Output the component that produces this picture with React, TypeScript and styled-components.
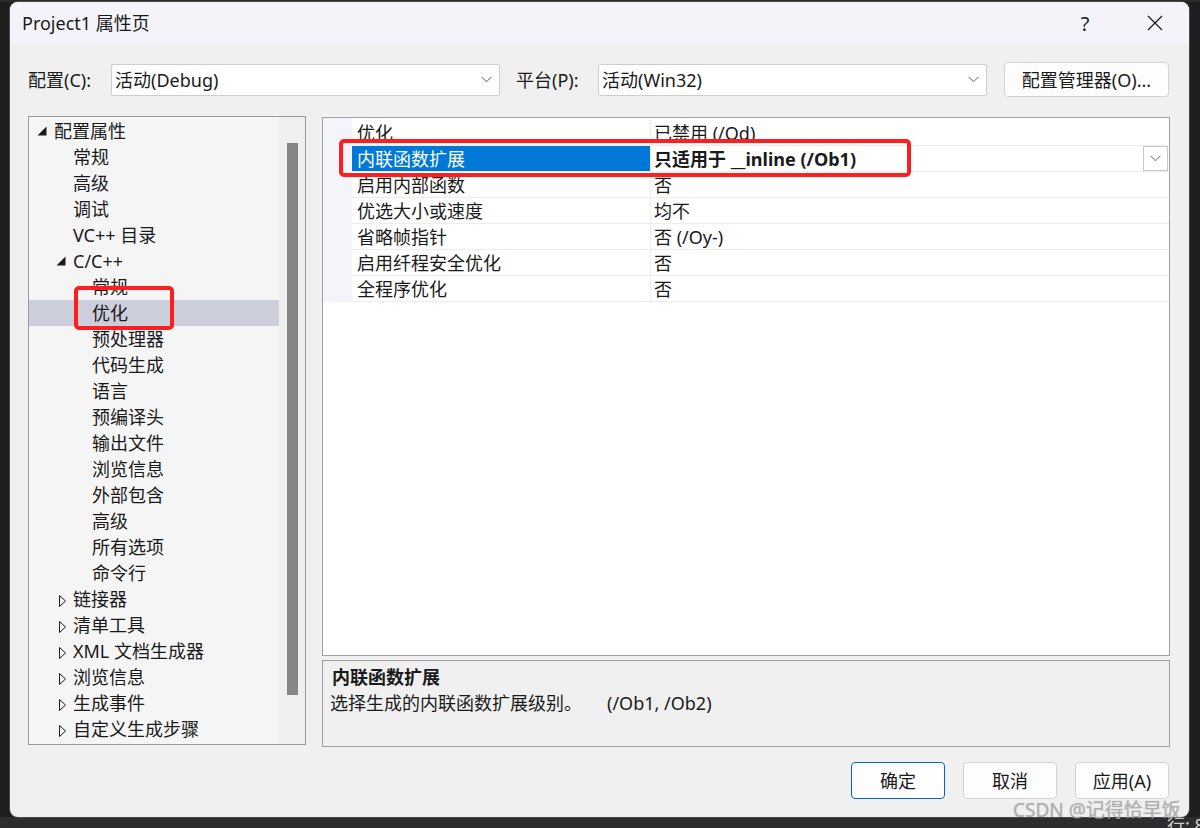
import React from "react";
import styled, { createGlobalStyle } from "styled-components";

const GlobalStyle = createGlobalStyle`
  html, body { margin: 0; padding: 0; background: #1e1e1e; }
  body { font-family: "Noto Sans", "Noto Sans CJK SC", sans-serif; }
  #root { width: 1200px; height: 828px; }
  * { box-sizing: border-box; }
`;

const FONT = `"Noto Sans", "Noto Sans CJK SC", sans-serif`;

const Page = styled.div`
  position: relative;
  width: 1200px;
  height: 828px;
  overflow: hidden;
  background: #1e1e1e;
  display: flex;
  flex-direction: column;
  font-family: ${FONT};
  color: #1a1a1a;
`;

const TopStrip = styled.div`
  height: 2px;
  background: #2b2b2b;
`;

const Window = styled.div`
  position: relative;
  width: 1179px;
  height: 815px;
  margin-left: 10px;
  background: #f0f0f0;
  border-radius: 8px;
  overflow: hidden;
  box-shadow: 0 0 0 1px #4a4a4a;
  display: flex;
  flex-direction: column;
`;

const TitleBar = styled.div`
  height: 42px;
  flex: none;
  background: #f3f3f9;
  display: flex;
  align-items: center;
  padding-left: 12px;
  padding-right: 11px;
`;

const TitleText = styled.div`
  font-size: 18px;
  line-height: 24px;
  color: #1a1a1a;
`;

const TitleButtons = styled.div`
  margin-left: auto;
  display: flex;
  gap: 24px;
`;

const TitleButton = styled.div`
  width: 46px;
  height: 42px;
  display: flex;
  align-items: center;
  justify-content: center;
  font-size: 20px;
  color: #1a1a1a;
`;

const Body = styled.div`
  flex: 1;
  display: flex;
  flex-direction: column;
  padding: 0 19px 18px 18px;
`;

const ConfigRow = styled.div`
  margin-top: 18px;
  height: 35px;
  display: flex;
  align-items: center;
`;

const Label = styled.div<{ $w: number; $ml?: number }>`
  width: ${(p) => p.$w}px;
  margin-left: ${(p) => p.$ml ?? 0}px;
  font-size: 18px;
  line-height: 24px;
  white-space: nowrap;
`;

const SelectBox = styled.div`
  width: 389px;
  height: 32px;
  background: #ffffff;
  border: 1px solid #cdcdcd;
  border-radius: 2px;
  display: flex;
  align-items: center;
  padding-left: 3px;
  padding-right: 7px;
  font-size: 18px;
  line-height: 24px;
`;

const SelectText = styled.span`
  flex: 1;
`;

const PushButton = styled.div<{ $w: number; $h: number; $primary?: boolean; $ml?: number }>`
  width: ${(p) => p.$w}px;
  height: ${(p) => p.$h}px;
  margin-left: ${(p) => p.$ml ?? 0}px;
  background: #fdfdfd;
  border: 1px solid ${(p) => (p.$primary ? "#0067c0" : "#d3d3d3")};
  border-radius: 4px;
  display: flex;
  align-items: center;
  justify-content: center;
  font-size: 18px;
  line-height: 24px;
  white-space: nowrap;
`;

const Main = styled.div`
  margin-top: 19px;
  height: 631px;
  display: grid;
  grid-template-columns: 278px 848px;
  column-gap: 16px;
  align-items: start;
`;

const TreePanel = styled.div`
  height: 629px;
  border: 1px solid #9a9a9a;
  background: #f5f5f5;
  display: grid;
  grid-template-columns: 1fr 26px;
`;

const TreeList = styled.div`
  padding-top: 1px;
  display: flex;
  flex-direction: column;
`;

const TreeRow = styled.div<{ $level: number; $selected?: boolean }>`
  height: 26px;
  display: flex;
  align-items: center;
  padding-left: ${(p) => 9 + p.$level * 19}px;
  background: ${(p) => (p.$selected ? "#cccedb" : "transparent")};
  font-size: 18px;
  line-height: 26px;
  white-space: nowrap;
  color: #1a1a1a;
`;

const Expander = styled.svg`
  width: 16px;
  height: 26px;
  flex: none;
`;

const ScrollTrack = styled.div`
  background: #efefef;
  padding: 26px 7px 0 8px;
`;

const ScrollThumb = styled.div`
  height: 552px;
  background: #868686;
`;

const RightColumn = styled.div`
  margin-top: 1px;
  display: flex;
  flex-direction: column;
  gap: 4px;
`;

const GridPanel = styled.div`
  height: 539px;
  border: 1px solid #a0a0a0;
  background: #ffffff;
`;

const GridRows = styled.div`
  padding-top: 2px;
  background: linear-gradient(to right, #f3f5fa 29px, #ffffff 29px);
  display: flex;
  flex-direction: column;
`;

const GridRow = styled.div`
  height: 26px;
  display: grid;
  grid-template-columns: 29px 298px 1fr;
`;

const MarginCell = styled.div`
  background: #f3f5fa;
`;

const NameCell = styled.div<{ $selected?: boolean }>`
  padding: 1px 0 0 5px;
  border-bottom: 1px solid #ededed;
  background: ${(p) => (p.$selected ? "#0078d7" : "#ffffff")};
  color: ${(p) => (p.$selected ? "#ffffff" : "#1a1a1a")};
  font-size: 18px;
  line-height: 24px;
  white-space: nowrap;
`;

const ValueCell = styled.div<{ $bold?: boolean }>`
  display: flex;
  align-items: flex-start;
  padding-left: 3px;
  padding-right: 1px;
  border-left: 1px solid #ededed;
  border-bottom: 1px solid #ededed;
  font-size: 18px;
  line-height: 24px;
  font-weight: ${(p) => (p.$bold ? 700 : 400)};
  white-space: nowrap;
  color: #1a1a1a;
`;

const ValueText = styled.span`
  flex: 1;
  padding-top: 1px;
`;

const DropButton = styled.div`
  width: 25px;
  height: 25px;
  border: 1px solid #c8c8c8;
  background: #ffffff;
  display: flex;
  align-items: center;
  justify-content: center;
`;

const DescPanel = styled.div`
  height: 87px;
  border: 1px solid #a0a0a0;
  background: #f0f0f0;
  padding: 3px 0 0 7px;
`;

const DescTitle = styled.div`
  margin-left: 2px;
  font-size: 18px;
  line-height: 26px;
  font-weight: 700;
`;

const DescText = styled.div`
  font-size: 18px;
  line-height: 26px;
  white-space: nowrap;
`;

const DescSwitch = styled.span`
  margin-left: 25px;
`;

const ButtonRow = styled.div`
  margin-top: 15px;
  display: flex;
  justify-content: flex-end;
  gap: 18px;
  padding-right: 1px;
`;

const Annotation = styled.div<{ $l: number; $t: number; $w: number; $h: number }>`
  position: absolute;
  left: ${(p) => p.$l}px;
  top: ${(p) => p.$t}px;
  width: ${(p) => p.$w}px;
  height: ${(p) => p.$h}px;
  border: 4px solid #ff1e1e;
  border-radius: 5px;
  pointer-events: none;
`;

const BottomBar = styled.div`
  height: 11px;
  background: #2d2d2d;
  overflow: hidden;
  padding-left: 1167px;
`;

const StatusText = styled.div`
  font-size: 18px;
  line-height: 20px;
  color: #d0d0d0;
  white-space: nowrap;
  margin-top: -2px;
`;

const Watermark = styled.div`
  position: absolute;
  left: 1013px;
  top: 798px;
  font-size: 19px;
  line-height: 24px;
  color: rgba(175, 175, 175, 0.92);
  text-shadow: 0 0 1px rgba(0, 0, 0, 0.25);
  white-space: nowrap;
  pointer-events: none;
`;

const Chevron = () => (
  <svg width="11" height="7" viewBox="0 0 11 7">
    <polyline points="0.5,0.8 5.5,5.8 10.5,0.8" fill="none" stroke="#5f5f5f" strokeWidth="1" />
  </svg>
);

const CloseIcon = () => (
  <svg width="16" height="16" viewBox="0 0 16 16">
    <path d="M1 1 L15 15 M15 1 L1 15" stroke="#1a1a1a" strokeWidth="1.2" fill="none" />
  </svg>
);

type Exp = "open" | "closed" | undefined;

const ExpanderIcon = ({ exp }: { exp: Exp }) => (
  <Expander viewBox="0 0 16 26">
    {exp === "open" && <polygon points="-0.5,17.5 8.5,17.5 8.5,8.5" fill="#1a1a1a" />}
    {exp === "closed" && (
      <polygon points="2.5,9.5 8.5,15 2.5,20.5" fill="none" stroke="#1a1a1a" strokeWidth="1" />
    )}
  </Expander>
);

const treeItems: { level: number; text: string; exp?: Exp; selected?: boolean }[] = [
  { level: 0, text: "配置属性", exp: "open" },
  { level: 1, text: "常规" },
  { level: 1, text: "高级" },
  { level: 1, text: "调试" },
  { level: 1, text: "VC++ 目录" },
  { level: 1, text: "C/C++", exp: "open" },
  { level: 2, text: "常规" },
  { level: 2, text: "优化", selected: true },
  { level: 2, text: "预处理器" },
  { level: 2, text: "代码生成" },
  { level: 2, text: "语言" },
  { level: 2, text: "预编译头" },
  { level: 2, text: "输出文件" },
  { level: 2, text: "浏览信息" },
  { level: 2, text: "外部包含" },
  { level: 2, text: "高级" },
  { level: 2, text: "所有选项" },
  { level: 2, text: "命令行" },
  { level: 1, text: "链接器", exp: "closed" },
  { level: 1, text: "清单工具", exp: "closed" },
  { level: 1, text: "XML 文档生成器", exp: "closed" },
  { level: 1, text: "浏览信息", exp: "closed" },
  { level: 1, text: "生成事件", exp: "closed" },
  { level: 1, text: "自定义生成步骤", exp: "closed" },
];

const props: { name: string; value: string; selected?: boolean }[] = [
  { name: "优化", value: "已禁用 (/Od)" },
  { name: "内联函数扩展", value: "只适用于 __inline (/Ob1)", selected: true },
  { name: "启用内部函数", value: "否" },
  { name: "优选大小或速度", value: "均不" },
  { name: "省略帧指针", value: "否 (/Oy-)" },
  { name: "启用纤程安全优化", value: "否" },
  { name: "全程序优化", value: "否" },
];

export default function App() {
  return (
    <>
      <GlobalStyle />
      <Page>
        <TopStrip />
        <Window>
          <TitleBar>
            <TitleText>Project1 属性页</TitleText>
            <TitleButtons>
              <TitleButton>?</TitleButton>
              <TitleButton>
                <CloseIcon />
              </TitleButton>
            </TitleButtons>
          </TitleBar>
          <Body>
            <ConfigRow>
              <Label $w={83}>配置(C):</Label>
              <SelectBox>
                <SelectText>活动(Debug)</SelectText>
                <Chevron />
              </SelectBox>
              <Label $w={82} $ml={16}>
                平台(P):
              </Label>
              <SelectBox>
                <SelectText>活动(Win32)</SelectText>
                <Chevron />
              </SelectBox>
              <PushButton $w={165} $h={35} $ml={17}>
                配置管理器(O)...
              </PushButton>
            </ConfigRow>
            <Main>
              <TreePanel>
                <TreeList>
                  {treeItems.map((it, i) => (
                    <TreeRow key={i} $level={it.level} $selected={it.selected}>
                      <ExpanderIcon exp={it.exp} />
                      {it.text}
                    </TreeRow>
                  ))}
                </TreeList>
                <ScrollTrack>
                  <ScrollThumb />
                </ScrollTrack>
              </TreePanel>
              <RightColumn>
                <GridPanel>
                  <GridRows>
                    {props.map((p, i) => (
                      <GridRow key={i}>
                        <MarginCell />
                        <NameCell $selected={p.selected}>{p.name}</NameCell>
                        <ValueCell $bold={p.selected}>
                          <ValueText>{p.value}</ValueText>
                          {p.selected && (
                            <DropButton>
                              <Chevron />
                            </DropButton>
                          )}
                        </ValueCell>
                      </GridRow>
                    ))}
                  </GridRows>
                </GridPanel>
                <DescPanel>
                  <DescTitle>内联函数扩展</DescTitle>
                  <DescText>
                    选择生成的内联函数扩展级别。<DescSwitch>(/Ob1, /Ob2)</DescSwitch>
                  </DescText>
                </DescPanel>
              </RightColumn>
            </Main>
            <ButtonRow>
              <PushButton $w={94} $h={37} $primary>
                确定
              </PushButton>
              <PushButton $w={94} $h={37}>
                取消
              </PushButton>
              <PushButton $w={94} $h={37}>
                应用(A)
              </PushButton>
            </ButtonRow>
          </Body>
          <Annotation $l={329} $t={137} $w={572} $h={38} />
          <Annotation $l={64} $t={284} $w={100} $h={44} />
        </Window>
        <BottomBar>
          <StatusText>行: 8</StatusText>
        </BottomBar>
        <Watermark>CSDN @记得恰早饭</Watermark>
      </Page>
    </>
  );
}
